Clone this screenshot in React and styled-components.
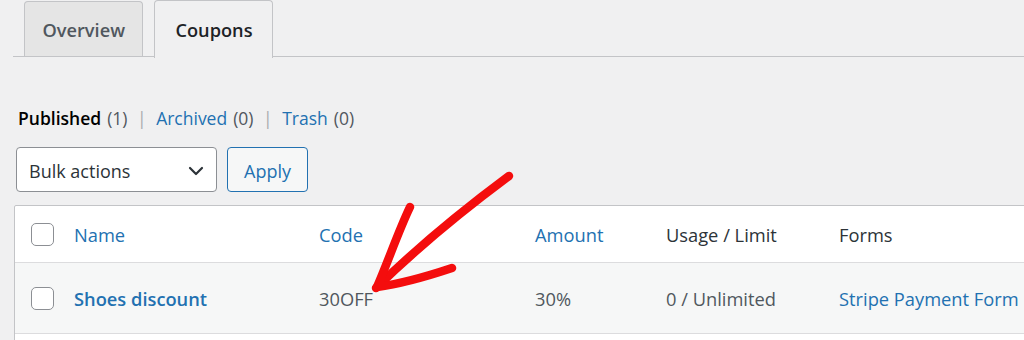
import React from 'react';
import styled, { createGlobalStyle } from 'styled-components';

const GlobalStyle = createGlobalStyle`
    html, body {
        margin: 0;
        padding: 0;
        background: #f0f0f1;
        font-family: "Open Sans", "Noto Sans", sans-serif;
        color: #3c434a;
        overflow: hidden;
    }
`;

const columns = [
    { label: 'Name', link: true },
    { label: 'Code', link: true },
    { label: 'Amount', link: true },
    { label: 'Usage / Limit' },
    { label: 'Forms' },
];

function App() {
    return (
        <Page>
            <GlobalStyle />
            <Tabs>
                <Tab>Overview</Tab>
                <Tab active>Coupons</Tab>
            </Tabs>

            <Filters>
                <Current>Published</Current>
                <Count>(1)</Count>
                <Sep>|</Sep>
                <FilterLink>Archived</FilterLink>
                <Count>(0)</Count>
                <Sep>|</Sep>
                <FilterLink>Trash</FilterLink>
                <Count>(0)</Count>
            </Filters>

            <Actions>
                <Select>
                    Bulk actions
                    <svg width="16" height="10" viewBox="0 0 16 10">
                        <path d="M2 2l6 6 6-6" fill="none" stroke="#2c3338" strokeWidth="2.2" strokeLinecap="round" strokeLinejoin="round" />
                    </svg>
                </Select>
                <ApplyButton>Apply</ApplyButton>
            </Actions>

            <Table>
                <HeadRow>
                    <CheckCell><Checkbox /></CheckCell>
                    {columns.map((c) => (
                        <HeadCell key={c.label} link={c.link}>{c.label}</HeadCell>
                    ))}
                </HeadRow>
                <BodyRow>
                    <CheckCell><Checkbox /></CheckCell>
                    <NameCell>Shoes discount</NameCell>
                    <Cell>30OFF</Cell>
                    <Cell>30%</Cell>
                    <Cell>0 / Unlimited</Cell>
                    <Cell link>Stripe Payment Form</Cell>
                </BodyRow>
                <EmptyRow />
            </Table>

            <Arrow width="1024" height="340" viewBox="0 0 1024 340">
                <path d="M509 176 C470 205 420 245 376 288" fill="none" stroke="#f40d0d" strokeWidth="8.5" strokeLinecap="round" />
                <path d="M410 207 C398 232 388 262 377 287 C400 284 428 276 452 268" fill="none" stroke="#f40d0d" strokeWidth="8.5" strokeLinecap="round" strokeLinejoin="round" />
            </Arrow>
        </Page>
    );
}

export default App;

const Page = styled.div`
    position: relative;
    width: 1024px;
    height: 340px;
    overflow: hidden;
`;

const Tabs = styled.div`
    display: flex;
    align-items: flex-end;
    gap: 11px;
    height: 56px;
    margin-left: 13px;
    padding-left: 11px;
    border-bottom: 1.5px solid #c3c4c7;
`;

const Tab = styled.div`
    height: ${(p) => (p.active ? '57.5px' : '55px')};
    box-sizing: border-box;
    padding: 0 ${(p) => (p.active ? '20px' : '17.5px')};
    display: flex;
    align-items: center;
    font-size: 18.2px;
    font-weight: 600;
    color: ${(p) => (p.active ? '#1d2327' : '#50575e')};
    background: ${(p) => (p.active ? '#f0f0f1' : '#e5e5e5')};
    border: 1.5px solid #c3c4c7;
    border-bottom: none;
    border-radius: 4px 4px 0 0;
    margin-bottom: ${(p) => (p.active ? '-1.5px' : '0')};
    padding-top: 2px;
`;

const Filters = styled.div`
    display: flex;
    align-items: center;
    gap: 6px;
    margin: 48px 0 0 18px;
    height: 26px;
    font-size: 17.5px;
`;

const Current = styled.span`
    font-weight: 600;
    color: #000;
`;

const Count = styled.span`
    color: #50575e;
`;

const Sep = styled.span`
    color: #a7aaad;
    margin: 0 3.5px;
`;

const FilterLink = styled.span`
    color: #2271b1;
`;

const Actions = styled.div`
    display: flex;
    gap: 10px;
    margin: 16px 0 0 16px;
`;

const Select = styled.div`
    width: 201px;
    height: 45px;
    box-sizing: border-box;
    display: flex;
    align-items: center;
    justify-content: space-between;
    padding: 2px 12px 0 12px;
    background: #fff;
    border: 1.5px solid #8c8f94;
    border-radius: 4px;
    font-size: 18px;
    color: #2c3338;
`;

const ApplyButton = styled.div`
    width: 81px;
    height: 45px;
    box-sizing: border-box;
    display: flex;
    align-items: center;
    justify-content: center;
    padding-top: 2px;
    background: #f6f7f7;
    border: 1.5px solid #2271b1;
    border-radius: 4px;
    font-size: 18px;
    color: #2271b1;
`;

const Table = styled.div`
    margin: 13px 0 0 14px;
    width: 1040px;
    background: #fff;
    border: 1.5px solid #c3c4c7;
    border-radius: 2px;
`;

const grid = `
    display: grid;
    grid-template-columns: 60px 245px 216px 131px 173px 1fr;
    align-items: center;
`;

const HeadRow = styled.div`
    ${grid}
    height: 56px;
    border-bottom: 1.5px solid #dcdcde;
`;

const BodyRow = styled.div`
    ${grid}
    height: 70px;
    background: #f6f7f7;
    border-bottom: 1.5px solid #dcdcde;
`;

const EmptyRow = styled.div`
    height: 20px;
`;

const CheckCell = styled.div`
    display: flex;
    padding-left: 16px;
`;

const Checkbox = styled.div`
    width: 23px;
    height: 23px;
    box-sizing: border-box;
    background: #fff;
    border: 1.5px solid #8c8f94;
    border-radius: 5px;
`;

const HeadCell = styled.div`
    font-size: 18.3px;
    color: ${(p) => (p.link ? '#2271b1' : '#2c3338')};
    white-space: nowrap;
    margin-left: -1px;
`;

const Cell = styled.div`
    font-size: 18.3px;
    color: ${(p) => (p.link ? '#2271b1' : '#50575e')};
    white-space: nowrap;
    margin-left: -1px;
`;

const NameCell = styled(Cell)`
    font-weight: 600;
    color: #2271b1;
`;

const Arrow = styled.svg`
    position: absolute;
    left: 0;
    top: 0;
    pointer-events: none;
`;
